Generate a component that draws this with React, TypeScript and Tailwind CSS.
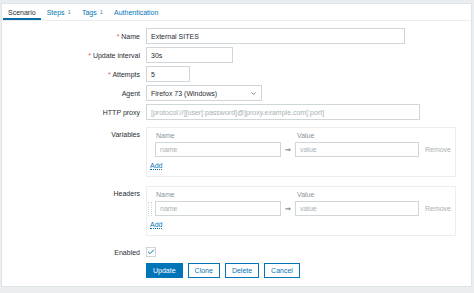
import { Check, ChevronDown } from 'lucide-react';

const FONT = { fontFamily: '"Liberation Sans", Arial, sans-serif' };

function Row({ label, req, children, top }: { label: string; req?: boolean; children: React.ReactNode; top?: boolean }) {
  return (
    <div className={`flex ${top ? 'items-start' : 'items-center'}`}>
      <div className={`w-[144px] shrink-0 pr-[6px] text-right ${top ? 'pt-[4px]' : ''}`}>
        {req && <span className="text-[#e45959]">* </span>}
        {label}
      </div>
      {children}
    </div>
  );
}

function Input({ value, placeholder, w, h = 'h-[16px]' }: { value?: string; placeholder?: string; w: string; h?: string }) {
  return (
    <div className={`flex items-center border border-[#cfd6da] bg-white px-[4px] ${h} ${w}`}>
      {value ? <span>{value}</span> : <span className="text-[#a8b0b4]">{placeholder}</span>}
    </div>
  );
}

function PairTable({ handle }: { handle?: boolean }) {
  return (
    <div className="w-[310px] border border-[#ebeef0] pb-[6px] pl-[1px] pr-[4px] pt-[3px]">
      <div className="flex h-[8px] items-center text-[#8a9499]">
        <span className="ml-[8px] w-[140px]">Name</span>
        <span className="ml-[1px]">Value</span>
      </div>
      <div className="mt-[3px] flex items-center">
        <div className="flex w-[7px] justify-start">
          {handle && <div className="h-[14px] w-[4px] border-x border-dotted border-[#d0d6d9]" />}
        </div>
        <Input placeholder="name" w="w-[126px]" h="h-[15px]" />
        <span className="w-[14px] text-center text-[#555]">⇒</span>
        <Input placeholder="value" w="w-[124px]" h="h-[15px]" />
        <span className="ml-[6px] text-[#a8b0b4]">Remove</span>
      </div>
      <div className="ml-[2px] mt-[5px] h-[8px]">
        <span className="border-b border-dotted border-[#0275b8] text-[#0275b8]">Add</span>
      </div>
    </div>
  );
}

function Btn({ children, primary }: { children: React.ReactNode; primary?: boolean }) {
  return (
    <div
      className={`flex h-[15px] items-center justify-center border px-[6px] ${
        primary ? 'border-[#0275b8] bg-[#0275b8] text-white' : 'border-[#0275b8] bg-white text-[#0275b8]'
      }`}
    >
      {children}
    </div>
  );
}

export default function App() {
  return (
    <div className="h-[293px] w-[474px] bg-[#ebeef0] pt-[3px] text-[7px] leading-none text-[#1f2c33]" style={FONT}>
      <div className="ml-[1px] mr-[2px] h-[284px] border border-[#dfe4e7] bg-white">
        <div className="flex h-[17px] items-stretch border-b border-[#ebeef0] pl-[1px]">
          <div className="flex items-center border-b-2 border-[#0a6aa8] px-[5px] pt-[2px]">Scenario</div>
          <div className="ml-[6px] flex items-center text-[#0275b8]">
            Steps <span className="ml-[3px] text-[6px] text-[#768d99]">1</span>
          </div>
          <div className="ml-[11px] flex items-center text-[#0275b8]">
            Tags <span className="ml-[3px] text-[6px] text-[#768d99]">1</span>
          </div>
          <div className="ml-[11px] flex items-center text-[#0275b8]">Authentication</div>
        </div>

        <div className="flex flex-col gap-[3px] pt-[7px]">
          <Row label="Name" req>
            <Input value="External SITES" w="w-[259px]" />
          </Row>
          <Row label="Update interval" req>
            <Input value="30s" w="w-[87px]" />
          </Row>
          <Row label="Attempts" req>
            <Input value="5" w="w-[44px]" />
          </Row>
          <Row label="Agent">
            <div className="flex h-[16px] w-[116px] items-center justify-between border border-[#cfd6da] px-[4px]">
              <span>Firefox 73 (Windows)</span>
              <ChevronDown className="h-[7px] w-[7px] text-[#555]" strokeWidth={2.5} />
            </div>
          </Row>
          <Row label="HTTP proxy">
            <Input placeholder="[protocol://][user[:password]@]proxy.example.com[:port]" w="w-[274px]" />
          </Row>
          <div className="mt-[4px]">
            <Row label="Variables" top>
              <PairTable />
            </Row>
          </div>
          <div className="mt-[6px]">
            <Row label="Headers" top>
              <PairTable handle />
            </Row>
          </div>
          <div className="mt-[8px]">
            <Row label="Enabled">
              <div className="flex h-[10px] w-[10px] items-center justify-center border border-[#cfd6da]">
                <Check className="h-[8px] w-[8px] text-[#0275b8]" strokeWidth={3} />
              </div>
            </Row>
          </div>
          <div className="ml-[144px] mt-[3px] flex gap-[5px]">
            <Btn primary>Update</Btn>
            <Btn>Clone</Btn>
            <Btn>Delete</Btn>
            <Btn>Cancel</Btn>
          </div>
        </div>
      </div>
    </div>
  );
}
